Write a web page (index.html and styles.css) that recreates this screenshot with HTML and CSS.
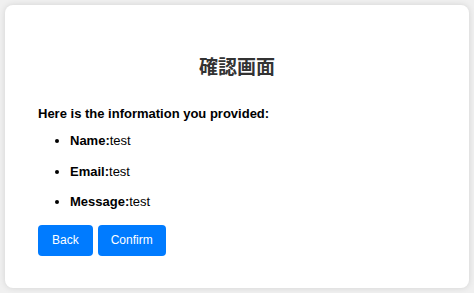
FILE: index.html
```html
<!DOCTYPE html>
<html lang="ja">
<head>
    <meta charset="UTF-8">
    <meta name="viewport" content="width=device-width, initial-scale=1.0">
    <title>確認画面</title>
    <link rel="stylesheet" href="styles.css">
</head>
<body>
    <div class="container">
        <h2 class="title">確認画面</h2>
        <p class="lead">Here is the information you provided:</p>
        <ul class="info-list">
            <li><strong>Name:</strong>test</li>
            <li><strong>Email:</strong>test</li>
            <li><strong>Message:</strong>test</li>
        </ul>
        <div class="actions">
            <button class="btn" type="button">Back</button>
            <button class="btn" type="submit">Confirm</button>
        </div>
    </div>
</body>
</html>
```

FILE: styles.css
```css
body {
    margin: 0;
    padding: 5px 5px;
    font-family: "Liberation Sans", Arial, "Noto Sans CJK JP", sans-serif;
    background-color: #f0f0f0;
}

.container {
    background: white;
    border-radius: 8px;
    box-shadow: 0 0 6px rgba(0, 0, 0, 0.12);
    padding: 32px 33px;
    height: 219px;
}

.title {
    text-align: center;
    font-size: 19px;
    font-weight: bold;
    color: #333;
    margin: 15px 0 27px;
}

.lead {
    font-size: 13px;
    font-weight: bold;
    margin: 0 0 12px;
}

.info-list {
    margin: 0;
    padding-left: 32px;
    font-size: 13px;
}

.info-list li {
    margin-bottom: 15.5px;
}

.actions {
    display: flex;
    gap: 5px;
    margin-top: 3px;
}

.btn {
    background-color: #007bff;
    color: white;
    border: none;
    border-radius: 4px;
    font-family: "Liberation Sans", Arial, sans-serif;
    font-size: 12px;
    height: 31px;
    padding: 0 14px;
}

.btn + .btn {
    padding: 0 13px;
}
```
